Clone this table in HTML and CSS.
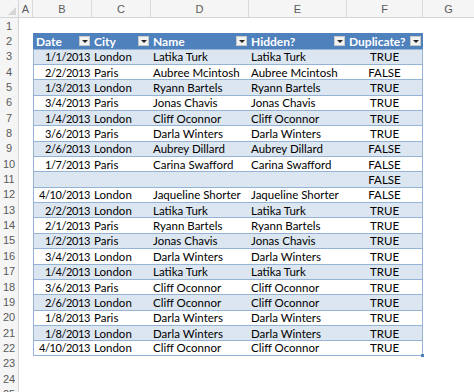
FILE: index.html
```html
<!DOCTYPE html>
<html>
<head>
<meta charset="utf-8">
<link rel="stylesheet" href="styles.css">
</head>
<body>
<div class="sheet">
  <div class="row colhead">
    <div class="corner"><span class="tri"></span></div>
    <div class="ch">A</div><div class="ch">B</div><div class="ch">C</div><div class="ch">D</div><div class="ch">E</div><div class="ch">F</div><div class="ch last">G</div>
  </div>
  <div class="row"><div class="rn">1</div></div>
  <div class="row">
    <div class="rn">2</div><div class="a"></div>
    <div class="th b">Date<span class="dd"></span></div>
    <div class="th">City<span class="dd"></span></div>
    <div class="th">Name<span class="dd"></span></div>
    <div class="th">Hidden?<span class="dd"></span></div>
    <div class="th f">Duplicate?<span class="dd"></span></div>
  </div>
  <div class="row band"><div class="rn">3</div><div class="a"></div><div class="td b r">1/1/2013</div><div class="td">London</div><div class="td">Latika Turk</div><div class="td">Latika Turk</div><div class="td f c">TRUE</div></div>
  <div class="row"><div class="rn">4</div><div class="a"></div><div class="td b r">2/2/2013</div><div class="td">Paris</div><div class="td">Aubree Mcintosh</div><div class="td">Aubree Mcintosh</div><div class="td f c">FALSE</div></div>
  <div class="row band"><div class="rn">5</div><div class="a"></div><div class="td b r">1/3/2013</div><div class="td">London</div><div class="td">Ryann Bartels</div><div class="td">Ryann Bartels</div><div class="td f c">TRUE</div></div>
  <div class="row"><div class="rn">6</div><div class="a"></div><div class="td b r">3/4/2013</div><div class="td">Paris</div><div class="td">Jonas Chavis</div><div class="td">Jonas Chavis</div><div class="td f c">TRUE</div></div>
  <div class="row band"><div class="rn">7</div><div class="a"></div><div class="td b r">1/4/2013</div><div class="td">London</div><div class="td">Cliff Oconnor</div><div class="td">Cliff Oconnor</div><div class="td f c">TRUE</div></div>
  <div class="row"><div class="rn">8</div><div class="a"></div><div class="td b r">3/6/2013</div><div class="td">Paris</div><div class="td">Darla Winters</div><div class="td">Darla Winters</div><div class="td f c">TRUE</div></div>
  <div class="row band"><div class="rn">9</div><div class="a"></div><div class="td b r">2/6/2013</div><div class="td">London</div><div class="td">Aubrey Dillard</div><div class="td">Aubrey Dillard</div><div class="td f c">FALSE</div></div>
  <div class="row"><div class="rn">10</div><div class="a"></div><div class="td b r">1/7/2013</div><div class="td">Paris</div><div class="td">Carina Swafford</div><div class="td">Carina Swafford</div><div class="td f c">FALSE</div></div>
  <div class="row band"><div class="rn">11</div><div class="a"></div><div class="td b r"></div><div class="td"></div><div class="td"></div><div class="td"></div><div class="td f c">FALSE</div></div>
  <div class="row"><div class="rn">12</div><div class="a"></div><div class="td b r">4/10/2013</div><div class="td">London</div><div class="td">Jaqueline Shorter</div><div class="td">Jaqueline Shorter</div><div class="td f c">FALSE</div></div>
  <div class="row band"><div class="rn">13</div><div class="a"></div><div class="td b r">2/2/2013</div><div class="td">London</div><div class="td">Latika Turk</div><div class="td">Latika Turk</div><div class="td f c">TRUE</div></div>
  <div class="row"><div class="rn">14</div><div class="a"></div><div class="td b r">2/1/2013</div><div class="td">Paris</div><div class="td">Ryann Bartels</div><div class="td">Ryann Bartels</div><div class="td f c">TRUE</div></div>
  <div class="row band"><div class="rn">15</div><div class="a"></div><div class="td b r">1/2/2013</div><div class="td">Paris</div><div class="td">Jonas Chavis</div><div class="td">Jonas Chavis</div><div class="td f c">TRUE</div></div>
  <div class="row"><div class="rn">16</div><div class="a"></div><div class="td b r">3/4/2013</div><div class="td">London</div><div class="td">Darla Winters</div><div class="td">Darla Winters</div><div class="td f c">TRUE</div></div>
  <div class="row band"><div class="rn">17</div><div class="a"></div><div class="td b r">1/4/2013</div><div class="td">London</div><div class="td">Latika Turk</div><div class="td">Latika Turk</div><div class="td f c">TRUE</div></div>
  <div class="row"><div class="rn">18</div><div class="a"></div><div class="td b r">3/6/2013</div><div class="td">Paris</div><div class="td">Cliff Oconnor</div><div class="td">Cliff Oconnor</div><div class="td f c">TRUE</div></div>
  <div class="row band"><div class="rn">19</div><div class="a"></div><div class="td b r">2/6/2013</div><div class="td">London</div><div class="td">Cliff Oconnor</div><div class="td">Cliff Oconnor</div><div class="td f c">TRUE</div></div>
  <div class="row"><div class="rn">20</div><div class="a"></div><div class="td b r">1/8/2013</div><div class="td">Paris</div><div class="td">Darla Winters</div><div class="td">Darla Winters</div><div class="td f c">TRUE</div></div>
  <div class="row band"><div class="rn">21</div><div class="a"></div><div class="td b r">1/8/2013</div><div class="td">London</div><div class="td">Darla Winters</div><div class="td">Darla Winters</div><div class="td f c">TRUE</div></div>
  <div class="row lastrow"><div class="rn">22</div><div class="a"></div><div class="td b r">4/10/2013</div><div class="td">London</div><div class="td">Cliff Oconnor</div><div class="td">Cliff Oconnor</div><div class="td f c">TRUE<span class="grip"></span></div></div>
  <div class="row"><div class="rn">23</div></div>
  <div class="row"><div class="rn">24</div></div>
  <div class="row"><div class="rn">25</div></div>
</div>
</body>
</html>
```
FILE: styles.css
```css
html, body {
  margin: 0;
  padding: 0;
  background: #ffffff;
}
body {
  font-family: Lato, "Liberation Sans", sans-serif;
  font-size: 11.5px;
  color: #000;
  overflow: hidden;
  height: 392px;
}
.sheet {
  display: flex;
  flex-direction: column;
}
.row {
  display: grid;
  grid-template-columns: 19px 14px 59px 59px 98px 98px 76px 51px;
  height: 15.35px;
  box-sizing: border-box;
}
.colhead {
  height: 18px;
  background: #f5f5f5;
  border-bottom: 1px solid #d5d5d5;
}
.corner {
  position: relative;
  border-right: 1px solid #d5d5d5;
}
.tri {
  position: absolute;
  right: 2px;
  bottom: 2px;
  width: 0;
  height: 0;
  border-left: 8px solid transparent;
  border-bottom: 8px solid #d6d6d6;
}
.ch {
  display: flex;
  align-items: center;
  justify-content: center;
  color: #5a5a5a;
  font-family: "Liberation Sans", sans-serif;
  font-size: 11px;
  border-right: 1px solid #dadada;
}
.ch.last { border-right: none; }
.rn {
  background: #f5f5f5;
  border-right: 1px solid #d5d5d5;
  color: #5a5a5a;
  font-family: "Liberation Sans", sans-serif;
  font-size: 11px;
  display: flex;
  align-items: center;
  justify-content: center;
}
.th {
  position: relative;
  background: #4f81bd;
  color: #fff;
  font-weight: bold;
  font-size: 12px;
  padding-left: 2px;
  display: flex;
  align-items: center;
  box-sizing: border-box;
}
.th.b { border-left: 1px solid #4f81bd; }
.dd {
  position: absolute;
  right: 2px;
  top: 3px;
  width: 11px;
  height: 10px;
  box-sizing: border-box;
  background: #f2f2f2;
  border: 1px solid #c9c9c9;
}
.dd::after {
  content: "";
  position: absolute;
  left: 2px;
  top: 3px;
  border-left: 3px solid transparent;
  border-right: 3px solid transparent;
  border-top: 3px solid #222;
}
.td {
  padding-left: 2px;
  display: flex;
  align-items: center;
  white-space: nowrap;
  border-top: 1px solid #95b3d7;
  box-sizing: border-box;
  position: relative;
}
.band .td { background: #dce6f1; }
.td.b { border-left: 1px solid #95b3d7; }
.td.f { border-right: 1px solid #95b3d7; }
.td.r {
  justify-content: flex-end;
  padding-left: 0;
  padding-right: 2px;
  font-size: 11px;
  letter-spacing: -0.4px;
}
.td.c { justify-content: center; padding-left: 0; }
.lastrow .td { border-bottom: 1px solid #95b3d7; }
.grip {
  position: absolute;
  right: -2px;
  bottom: -2px;
  width: 3px;
  height: 3px;
  background: #4f81bd;
}
```
